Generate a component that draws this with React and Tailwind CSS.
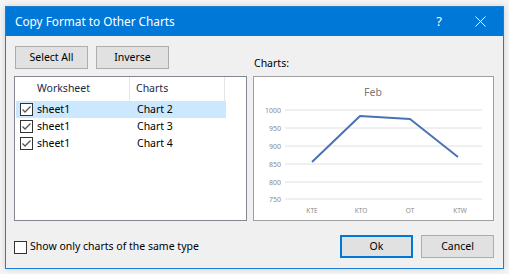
import React from 'react';

const font = { fontFamily: '"Segoe UI", "Noto Sans", sans-serif' };

const CheckBox = ({ checked }) => (
  <div className="w-[13px] h-[13px] border border-[#333333] bg-white flex items-center justify-center shrink-0">
    {checked && (
      <svg width="11" height="11" viewBox="0 0 11 11">
        <path d="M1.5 5.5 L4 8 L9.5 2.5" fill="none" stroke="#555555" strokeWidth="1.3" />
      </svg>
    )}
  </div>
);

const rows = [
  { sheet: 'sheet1', chart: 'Chart 2', selected: true },
  { sheet: 'sheet1', chart: 'Chart 3' },
  { sheet: 'sheet1', chart: 'Chart 4' },
];

const ChartPreview = () => {
  const grid = [
    { v: '1000', y: 110 },
    { v: '950', y: 128 },
    { v: '900', y: 146 },
    { v: '850', y: 164 },
    { v: '800', y: 182 },
    { v: '750', y: 199 },
  ];
  const cats = [
    { l: 'KTE', x: 312 },
    { l: 'KTO', x: 361 },
    { l: 'OT', x: 410 },
    { l: 'KTW', x: 460 },
  ];
  return (
    <svg width="239" height="143" viewBox="254 77 239 143" style={{ fontFamily: '"Segoe UI", "Noto Sans", sans-serif' }}>
      <text x="373" y="96" fontSize="10.5" fill="#7a7a7a" textAnchor="middle">Feb</text>
      {grid.map((g) => (
        <g key={g.v}>
          <line x1="285" x2="482" y1={g.y} y2={g.y} stroke="#e0e0e0" strokeWidth="1" />
          <text x="281" y={g.y + 2.5} fontSize="7" fill="#8a8a8a" textAnchor="end">{g.v}</text>
        </g>
      ))}
      <polyline points="312,162 360,116 410,119 458,157" fill="none" stroke="#4a72b8" strokeWidth="2" strokeLinejoin="round" />
      {cats.map((c) => (
        <text key={c.l} x={c.x} y="213" fontSize="6.5" fill="#8a8a8a" textAnchor="middle">{c.l}</text>
      ))}
    </svg>
  );
};

export default function App() {
  return (
    <div className="w-[509px] h-[274px] bg-[#f4f4f4] pt-[6px] pl-[5px]" style={font}>
      <div className="w-[499px] h-[263px] border border-[#1c7fd4] bg-[#f0f0f0] flex flex-col shadow-[0_0_6px_rgba(0,0,0,0.15)]">
        {/* Title bar */}
        <div className="h-[29px] bg-[#0078d7] flex items-center text-white text-[11.8px] pl-[9px] shrink-0">
          <span className="flex-1">Copy Format to Other Charts</span>
          <span className="w-[20px] text-center mr-[26px] text-[13px]">?</span>
          <svg width="11" height="11" viewBox="0 0 11 11" className="mr-[17px]">
            <path d="M0.5 0.5 L10.5 10.5 M10.5 0.5 L0.5 10.5" stroke="white" strokeWidth="1" />
          </svg>
        </div>

        {/* Content */}
        <div className="flex-1 flex flex-col pl-[8px] pr-[9px] pt-[10px] text-[10.5px] text-black">
          <div className="flex gap-[6px]">
            {/* Left column */}
            <div className="w-[233px] flex flex-col">
              <div className="flex gap-[8px] pl-[1px]">
                <button className="w-[73px] h-[23px] bg-[#e1e1e1] border border-[#adadad]">Select All</button>
                <button className="w-[73px] h-[23px] bg-[#e1e1e1] border border-[#adadad]">Inverse</button>
              </div>
              <div className="mt-[7px] h-[145px] border border-[#828790] bg-white">
                <div className="flex h-[24px] items-center text-[#1e2a3f]">
                  <div className="w-[115px] h-full pl-[22px] flex items-center border-r border-[#e5e5e5]">Worksheet</div>
                  <div className="w-[95px] h-full pl-[6px] flex items-center border-r border-[#e5e5e5]">Charts</div>
                </div>
                {rows.map((r, i) => (
                  <div key={i} className={`flex h-[17px] items-center w-[210px] ml-[1px] ${r.selected ? 'bg-[#cce8ff]' : ''}`}>
                    <div className="w-[115px] flex items-center pl-[4px] gap-[4px]">
                      <CheckBox checked />
                      <span>{r.sheet}</span>
                    </div>
                    <div className="pl-[6px]">{r.chart}</div>
                  </div>
                ))}
              </div>
            </div>

            {/* Right column */}
            <div className="w-[241px] flex flex-col">
              <div className="h-[23px] flex items-end pl-[1px] leading-none pb-[1px]">Charts:</div>
              <div className="mt-[7px] h-[145px] border border-[#a0a0a0] bg-white">
                <ChartPreview />
              </div>
            </div>
          </div>

          {/* Bottom row */}
          <div className="flex items-center mt-[14px]">
            <div className="flex items-center gap-[3px] flex-1 mt-[1px]">
              <CheckBox />
              <span>Show only charts of the same type</span>
            </div>
            <button className="w-[73px] h-[23px] bg-[#e1e1e1] border-2 border-[#0078d7] mr-[8px]">Ok</button>
            <button className="w-[73px] h-[23px] bg-[#e1e1e1] border border-[#adadad]">Cancel</button>
          </div>
        </div>
      </div>
    </div>
  );
}
